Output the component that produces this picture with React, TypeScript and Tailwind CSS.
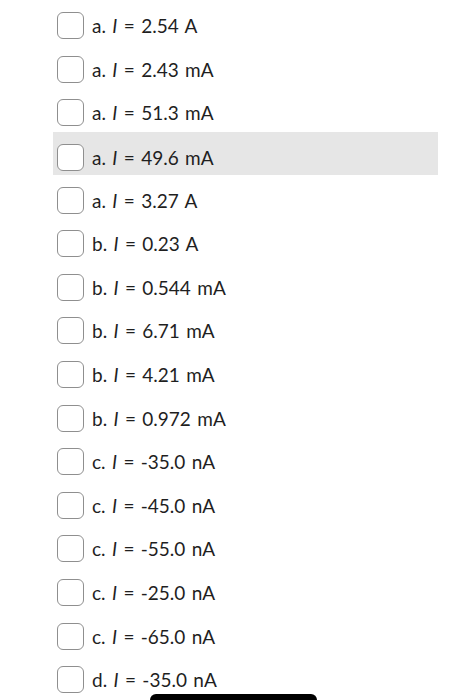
const options: [string, string][] = [
  ["a.", "2.54 A"],
  ["a.", "2.43 mA"],
  ["a.", "51.3 mA"],
  ["a.", "49.6 mA"],
  ["a.", "3.27 A"],
  ["b.", "0.23 A"],
  ["b.", "0.544 mA"],
  ["b.", "6.71 mA"],
  ["b.", "4.21 mA"],
  ["b.", "0.972 mA"],
  ["c.", "-35.0 nA"],
  ["c.", "-45.0 nA"],
  ["c.", "-55.0 nA"],
  ["c.", "-25.0 nA"],
  ["c.", "-65.0 nA"],
  ["d.", "-35.0 nA"],
];

export default function App() {
  return (
    <div
      className="relative w-[467px] h-[700px] overflow-hidden bg-white text-[#1f1f1f]"
      style={{ fontFamily: "Lato, 'Liberation Sans', sans-serif" }}
    >
      <div className="pt-[4px] pl-[53px] pr-[29px]">
        {options.map(([letter, value], i) =>
          i === 3 ? (
            <div
              key={i}
              className="flex items-center h-[43.6px] -mt-[3px] mb-[3px] pt-[7px] pl-[4px] bg-[#e6e6e6]"
            >
              <span className="w-[27px] h-[27px] rounded-[6px] border-[1.5px] border-[#8f8f8f] bg-white shrink-0" />
              <span className="ml-[8px] text-[19px] leading-none [word-spacing:1.5px]">
                {letter} <i>I</i> = {value}
              </span>
            </div>
          ) : (
            <div key={i} className="flex items-center h-[43.6px] pl-[4px]">
              <span className="w-[27px] h-[27px] rounded-[6px] border-[1.5px] border-[#8f8f8f] bg-white shrink-0" />
              <span className="ml-[8px] text-[19px] leading-none [word-spacing:1.5px]">
                {letter} <i>I</i> = {value}
              </span>
            </div>
          )
        )}
      </div>
      <div className="absolute left-[150px] top-[694px] w-[167px] h-[12px] rounded-full bg-black" />
    </div>
  );
}
